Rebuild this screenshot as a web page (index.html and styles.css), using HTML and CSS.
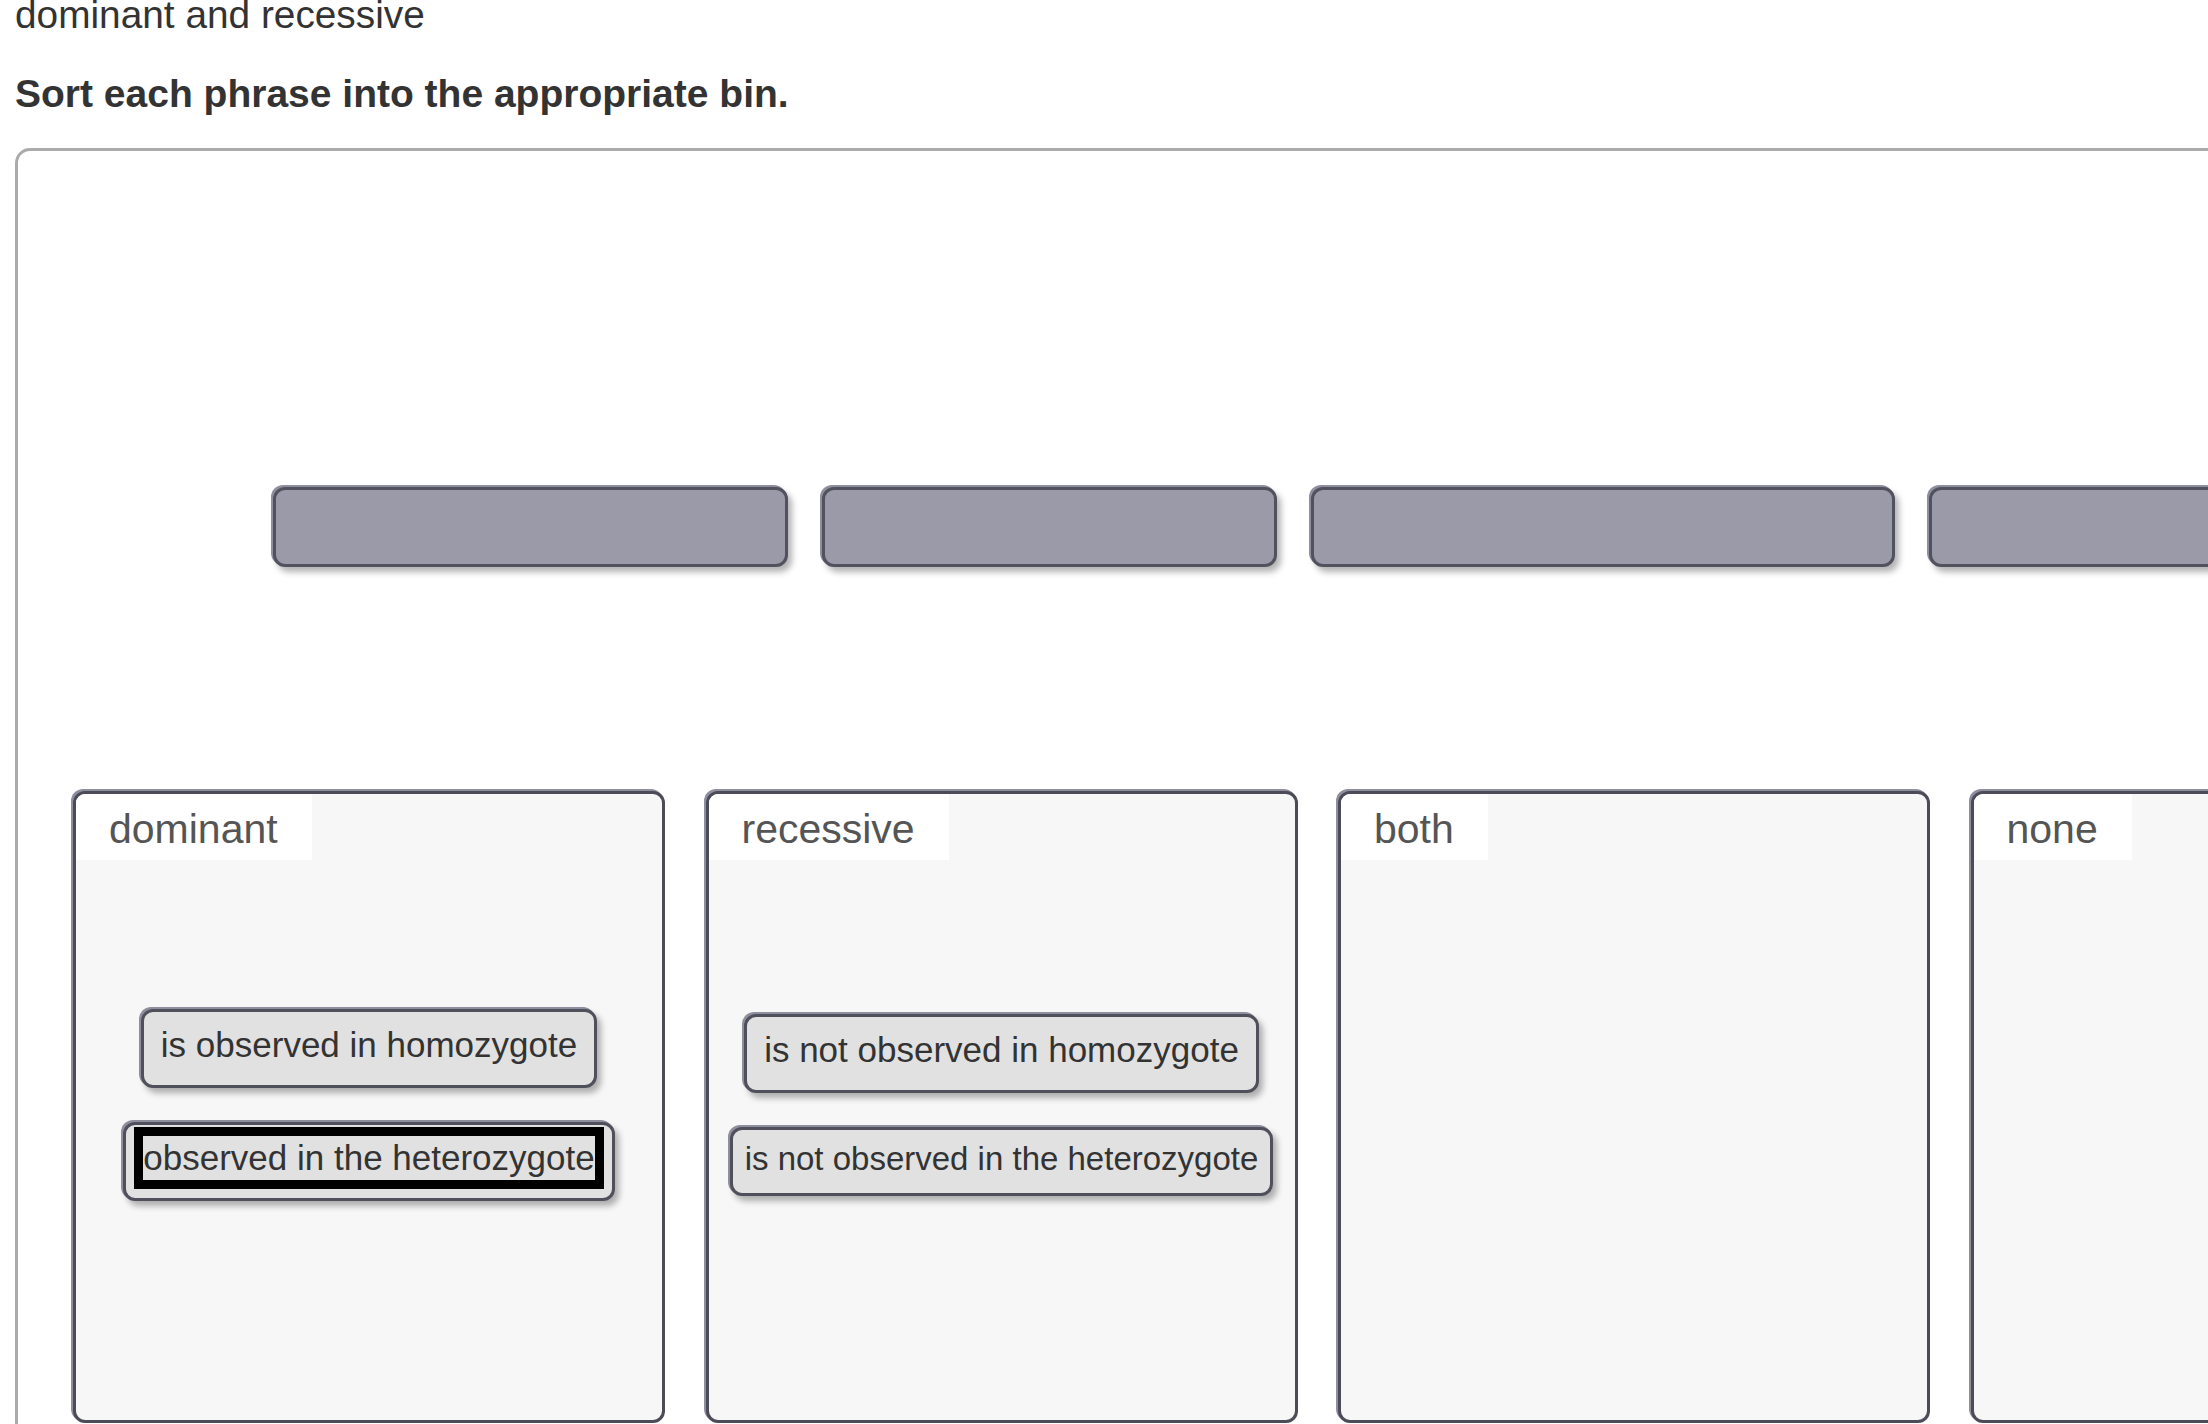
FILE: index.html
```html
<!DOCTYPE html>
<html lang="en">
<head>
<meta charset="utf-8">
<title>Sort each phrase</title>
<link rel="stylesheet" href="styles.css">
</head>
<body>
<div class="page">
  <p class="topic">dominant and recessive</p>
  <p class="prompt">Sort each phrase into the appropriate bin.</p>
  <div class="frame">
    <div class="zones">
      <div class="zone zone-a"></div>
      <div class="zone zone-b"></div>
      <div class="zone zone-c"></div>
      <div class="zone zone-d"></div>
    </div>
    <div class="bins">
      <div class="bin">
        <div class="bin-label">dominant</div>
        <div class="bin-cards">
          <div class="card">is observed in homozygote</div>
          <div class="card"><span class="focus-ring">observed in the heterozygote</span></div>
        </div>
      </div>
      <div class="bin">
        <div class="bin-label">recessive</div>
        <div class="bin-cards">
          <div class="card">is not observed in homozygote</div>
          <div class="card card-small">is not observed in the heterozygote</div>
        </div>
      </div>
      <div class="bin">
        <div class="bin-label">both</div>
        <div class="bin-cards"></div>
      </div>
      <div class="bin">
        <div class="bin-label">none</div>
        <div class="bin-cards"></div>
      </div>
    </div>
  </div>
</div>
</body>
</html>
```

FILE: styles.css
```css
html, body {
  margin: 0;
  padding: 0;
  overflow: hidden;
  background: #ffffff;
}

body {
  font-family: "Liberation Sans", Arial, sans-serif;
  color: #333333;
}

.page {
  padding-left: 15px;
}

.topic {
  margin: -7px 0 0;
  font-size: 38.8px;
  line-height: 44px;
  color: #333333;
}

.prompt {
  margin: 35px 0 0;
  font-size: 39px;
  line-height: 44px;
  font-weight: bold;
  color: #333333;
}

.frame {
  margin-top: 32px;
  width: 2700px;
  height: 1400px;
  box-sizing: border-box;
  border: 3px solid #ababab;
  border-radius: 15px;
  padding-top: 336px;
}

.zones {
  display: flex;
  gap: 34px;
  padding-left: 255px;
}

.zone {
  height: 80px;
  box-sizing: border-box;
  background: #9a9aa9;
  border: 3px solid #52525e;
  border-radius: 12px;
  box-shadow: -2px -2px 0 0 #8e8e9e, 4px 5px 6px rgba(0, 0, 0, 0.3);
}

.zone-a { width: 515px; }
.zone-b { width: 455px; }
.zone-c { width: 584px; }
.zone-d { width: 490px; }

.bins {
  display: flex;
  gap: 40.5px;
  margin-top: 224px;
  padding-left: 55px;
}

.bin {
  width: 592px;
  height: 632px;
  flex: none;
  box-sizing: border-box;
  border: 3px solid #4c4c58;
  border-radius: 12px;
  background: #f7f7f7;
  box-shadow: -2px -2px 0 0 #8e8e9e;
  display: grid;
}

.bin > * {
  grid-area: 1 / 1;
}

.bin-label {
  justify-self: start;
  align-self: start;
  background: #ffffff;
  color: #555555;
  font-size: 41px;
  line-height: 47px;
  padding: 12px 34px 7px 33px;
  border-top-left-radius: 9px;
}

.bin-cards {
  display: flex;
  flex-direction: column;
  align-items: center;
  justify-content: center;
  gap: 34px;
  padding-bottom: 4px;
}

.card {
  box-sizing: border-box;
  background: #e1e1e1;
  border: 3px solid #50505c;
  border-radius: 12px;
  padding: 11px 17px 18px;
  font-size: 35px;
  line-height: 44px;
  color: #333333;
  white-space: nowrap;
  box-shadow: -2px -2px 0 0 #8e8e9e, 4px 5px 6px rgba(0, 0, 0, 0.3);
}

.card-small {
  font-size: 33px;
  line-height: 41px;
  padding: 8px 12px 14px;
}

.focus-ring {
  display: block;
  outline: 9px solid #000000;
}
```
